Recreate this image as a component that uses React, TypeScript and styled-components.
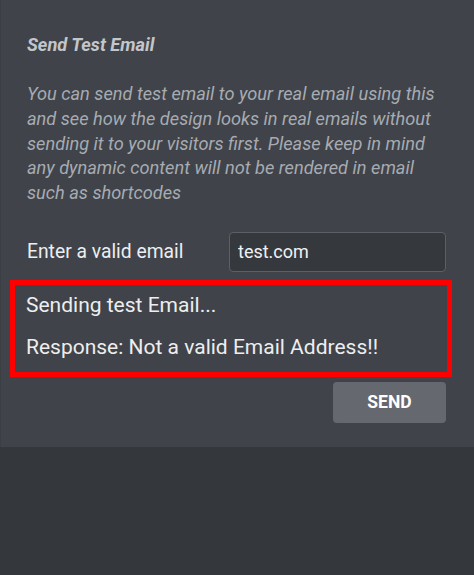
import styled, { createGlobalStyle } from "styled-components";

const GlobalStyle = createGlobalStyle`
  body {
    margin: 0;
    background: #34373c;
    font-family: Roboto, "Liberation Sans", sans-serif;
  }
`;

const App = () => {
  return (
    <>
      <GlobalStyle />
      <Panel>
        <Title>Send Test Email</Title>
        <Description>
          You can send test email to your real email using this and see how the
          design looks in real emails without sending it to your visitors
          first. Please keep in mind any dynamic content will not be rendered in
          email such as shortcodes
        </Description>
        <FieldRow>
          <Label>Enter a valid email</Label>
          <EmailInput defaultValue="test.com" />
        </FieldRow>
        <StatusBox>
          <StatusLine>Sending test Email...</StatusLine>
          <StatusLine>Response: Not a valid Email Address!!</StatusLine>
        </StatusBox>
        <Actions>
          <SendButton>SEND</SendButton>
        </Actions>
      </Panel>
    </>
  );
};

const Panel = styled.div`
  background: #404349;
  padding: 32px 28px 24px 26px;
  border-left: 1px solid #3b3e43;
  color: #e8e9eb;
`;
const Title = styled.h3`
  margin: 0;
  font-size: 18.2px;
  line-height: 25px;
  font-weight: 700;
  font-style: italic;
  color: #c3c6cb;
`;
const Description = styled.p`
  margin: 25px 0 0;
  font-size: 18.2px;
  line-height: 24.75px;
  font-style: italic;
  color: #a7abb2;
`;
const FieldRow = styled.div`
  display: flex;
  align-items: center;
  margin-top: 26px;
`;
const Label = styled.label`
  flex: 0 0 202px;
  font-size: 19.3px;
  color: #eceef0;
`;
const EmailInput = styled.input`
  flex: 1;
  min-width: 0;
  height: 40px;
  box-sizing: border-box;
  padding: 0 8px;
  background: #35383d;
  border: 1px solid #5c5f65;
  border-radius: 4px;
  color: #f0f1f3;
  font-family: Roboto, "Liberation Sans", sans-serif;
  font-size: 18px;
  outline: none;
`;
const StatusBox = styled.div`
  display: flex;
  flex-direction: column;
  gap: 17px;
  margin: 8px -6px 0 -17px;
  padding: 8.5px 11px 11.5px;
  border: 5px solid #ff0000;
`;
const StatusLine = styled.div`
  font-size: 21px;
  line-height: 25px;
  color: #eceef0;
`;
const Actions = styled.div`
  display: flex;
  justify-content: flex-end;
  margin-top: 5px;
`;
const SendButton = styled.button`
  width: 113px;
  height: 41px;
  background: #65686e;
  border: none;
  border-radius: 4px;
  color: #ffffff;
  font-family: Roboto, "Liberation Sans", sans-serif;
  font-size: 17.5px;
  font-weight: 700;
`;

export default App;
